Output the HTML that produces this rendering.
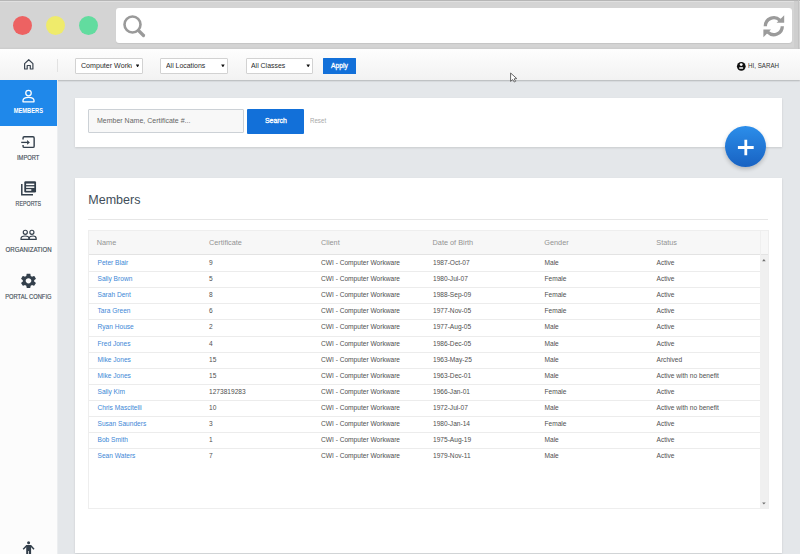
<!DOCTYPE html>
<html><head><meta charset="utf-8">
<style>
*{margin:0;padding:0;box-sizing:border-box}
html,body{width:800px;height:554px;overflow:hidden;background:#e4e7ea;font-family:"Liberation Sans",sans-serif}
.a{position:absolute}
#chrome{left:0;top:0;width:800px;height:48.5px;background:linear-gradient(#d4d4d4 0,#d4d4d4 45.5px,#cbcbcb 48.5px);border-top:1px solid #b6b6b6;box-shadow:inset 0 1px 0 #e0e0e0}
#addr{left:116px;top:8px;width:676px;height:35px;background:#fff;border-radius:3px;box-shadow:0 1px 1px rgba(0,0,0,.07)}
.dot{width:19.3px;height:19.3px;border-radius:50%}
#hdr{left:0;top:48.5px;width:800px;height:31.5px;background:linear-gradient(#fefefe,#f2f2f2);box-shadow:0 1px 1.5px rgba(0,0,0,.22)}
.sel{height:15.6px;width:67.8px;background:#fff;border:1px solid #d2d2d2;border-radius:1px;font-size:7.4px;color:#2a2a2a;line-height:14px;white-space:nowrap}.sel span{position:absolute;left:4.8px;top:0.2px;width:53.5px;overflow:hidden;transform:scaleX(0.935);transform-origin:0 0}
.sel:after{content:"";position:absolute;right:2.4px;top:5.4px;width:3.6px;height:3px;background:#111;clip-path:polygon(0 0,100% 0,50% 100%)}
#side{left:0;top:80px;width:57.2px;height:474px;background:#fcfcfc;box-shadow:1px 0 0 #eceef0}
.nav{left:0;width:57.2px;text-align:center;font-size:6.8px;line-height:8px;color:#46505a;white-space:nowrap;-webkit-text-stroke:0.15px #46505a}.nav span{display:inline-block}
.card{background:#fff;box-shadow:0 1px 2px rgba(0,0,0,.12)}
.th{position:absolute;top:7.5px;font-size:7.3px;color:#939393;line-height:8px}
.row{position:absolute;left:0;width:671px;height:16.07px;border-bottom:1px solid #ececec}
.row span{position:absolute;top:3.0px;font-size:6.6px;line-height:8px;color:#4f4f4f;white-space:nowrap}
.row span.n{color:#3d87d6}.row:last-child{border-bottom:none}
</style></head><body>
<div id="chrome" class="a"></div>
<div class="a dot" style="left:12.6px;top:16.2px;background:#ed6262"></div>
<div class="a dot" style="left:45.8px;top:16.2px;background:#efeb6b"></div>
<div class="a dot" style="left:78.8px;top:16.2px;background:#62dc9f"></div>
<div id="addr" class="a"></div>
<!-- search icon -->
<svg class="a" style="left:120px;top:12px" width="28" height="28" viewBox="0 0 28 28"><circle cx="12.5" cy="12.5" r="8" fill="none" stroke="#9a9a9a" stroke-width="2.6"/><line x1="18.5" y1="18.5" x2="23.5" y2="23.5" stroke="#9a9a9a" stroke-width="3.2" stroke-linecap="round"/></svg>
<!-- refresh icon -->
<svg class="a" style="left:760px;top:0" width="40" height="50" viewBox="0 0 40 50"><path d="M5.3 26.2 A8.5 8.5 0 0 1 19.8 20.2" fill="none" stroke="#9b9b9b" stroke-width="3.3"/><path d="M24.2 15.2 L24.2 22.8 L16.6 22.8 Z" fill="#9b9b9b"/><path d="M22.3 26.2 A8.5 8.5 0 0 1 7.8 32.2" fill="none" stroke="#9b9b9b" stroke-width="3.3"/><path d="M3.4 37.2 L3.4 29.6 L11 29.6 Z" fill="#9b9b9b"/></svg>
<div class="a" style="left:793.5px;top:1px;width:4.1px;height:47.5px;background:#cecece"></div><div class="a" style="left:797.6px;top:0;width:1px;height:48.5px;background:#c3c3c3"></div>

<div id="hdr" class="a"></div>
<div class="a" style="left:57px;top:58.5px;width:1px;height:13px;background:#e2e2e2"></div>
<div class="a sel" style="left:75px;top:58px"><span style="transform:scaleX(0.96);width:53px">Computer Workware</span></div>
<div class="a sel" style="left:160.3px;top:58px"><span>All Locations</span></div>
<div class="a sel" style="left:245.6px;top:58px"><span>All Classes</span></div>
<div class="a" style="left:323.2px;top:58.2px;width:32.8px;height:15.6px;background:#1270d9;border-radius:0.5px"></div><div class="a" style="left:331.2px;top:62.2px;color:#fff;font-size:6.9px;line-height:8px;-webkit-text-stroke:0.3px #fff;transform:scaleX(0.975);transform-origin:0 0">Apply</div>
<svg class="a" style="left:734px;top:58.3px" width="16" height="16" viewBox="734 58 16 16"><circle cx="741.3" cy="66.3" r="4.35" fill="#111"/><circle cx="741.2" cy="64.6" r="1.45" fill="#fff"/><rect x="739.1" y="67.2" width="4.1" height="1.5" rx="0.6" fill="#fff"/></svg>
<div class="a" style="left:748px;top:62.3px;font-size:6.8px;color:#333;line-height:8px;transform:scaleX(0.912);transform-origin:0 0;white-space:nowrap">HI, SARAH</div>

<div id="side" class="a"></div>
<div class="a" style="left:0;top:80px;width:57.2px;height:45.8px;background:#1f88ea"></div>
<svg class="a" style="left:0;top:0" width="57" height="554" viewBox="0 0 57 554">
<!-- members -->
<circle cx="28.5" cy="93.0" r="2.75" fill="none" stroke="#fff" stroke-width="1.25"/>
<path d="M23.0 101.8 V100.6 C23.0 98.4 25.6 97.4 28.5 97.4 C31.4 97.4 34.0 98.4 34.0 100.6 V101.8 Z" fill="none" stroke="#fff" stroke-width="1.3" stroke-linejoin="round"/>
<!-- import -->
<path d="M23.05 139.5 V137.9 Q23.05 136.7 24.25 136.7 H32.95 Q34.15 136.7 34.15 137.9 V146.15 Q34.15 147.35 32.95 147.35 H24.25 Q23.05 147.35 23.05 146.15 V144.9" fill="none" stroke="#333f4b" stroke-width="1.4"/>
<path d="M21.2 142.4 H27.6" stroke="#333f4b" stroke-width="1.3"/>
<path d="M27.1 140 L29.9 142.4 L27.1 144.8 Z" fill="#333f4b"/>
<!-- reports -->
<rect x="24.3" y="181.2" width="11.75" height="11.3" rx="1.2" fill="#333f4b"/>
<rect x="26.1" y="183.6" width="8.2" height="1.5" fill="#fff"/>
<rect x="26.1" y="186.4" width="8.2" height="1.5" fill="#fff"/>
<rect x="26.1" y="189.2" width="5.2" height="1.6" fill="#fff"/>
<path d="M21.8 184 V194.8 H33" fill="none" stroke="#333f4b" stroke-width="1.5"/>
<!-- organization -->
<circle cx="25.3" cy="232.3" r="2.05" fill="none" stroke="#333f4b" stroke-width="1.15"/>
<circle cx="31.9" cy="232.3" r="2.05" fill="none" stroke="#333f4b" stroke-width="1.15"/>
<path d="M21.0 239.4 V238.7 C21.0 236.9 23.1 236.0 25.05 236.0 C27.0 236.0 29.1 236.9 29.1 238.7 V239.4 Z" fill="none" stroke="#333f4b" stroke-width="1.2" stroke-linejoin="round"/>
<path d="M29.1 239.4 V238.7 C29.1 236.9 31.2 236.0 33.15 236.0 C35.1 236.0 36.2 236.9 36.2 238.7 V239.4 Z" fill="none" stroke="#333f4b" stroke-width="1.2" stroke-linejoin="round"/>
<!-- gear -->
<g transform="translate(19.02 272.03) scale(0.79 0.735)"><path fill="#333f4b" d="M19.14,12.94c0.04-0.3,0.06-0.61,0.06-0.94c0-0.32-0.02-0.64-0.07-0.94l2.03-1.58c0.18-0.14,0.23-0.41,0.12-0.61l-1.92-3.32c-0.12-0.22-0.37-0.29-0.59-0.22l-2.39,0.96c-0.5-0.38-1.03-0.7-1.62-0.94L14.4,2.81c-0.04-0.24-0.24-0.41-0.48-0.41h-3.84c-0.24,0-0.43,0.17-0.47,0.41L9.25,5.35C8.66,5.590,8.12,5.92,7.63,6.29L5.24,5.33c-0.22-0.08-0.47,0-0.59,0.22L2.74,8.87C2.62,9.08,2.66,9.34,2.86,9.48l2.03,1.58C4.84,11.36,4.8,11.69,4.8,12s0.02,0.64,0.07,0.94l-2.03,1.58c-0.18,0.14-0.23,0.41-0.12,0.61l1.92,3.32c0.12,0.22,0.37,0.29,0.59,0.22l2.39-0.96c0.5,0.38,1.03,0.7,1.62,0.94l0.36,2.54c0.05,0.24,0.24,0.41,0.48,0.41h3.84c0.24,0,0.44-0.17,0.47-0.41l0.36-2.54c0.59-0.24,1.130-0.56,1.62-0.94l2.39,0.96c0.22,0.08,0.47,0,0.59-0.22l1.92-3.32c0.12-0.22,0.07-0.47-0.12-0.61L19.14,12.94z M12,15.6c-1.98,0-3.6-1.62-3.6-3.6s1.62-3.6,3.6-3.6s3.6,1.62,3.6,3.6S13.98,15.6,12,15.6z"/></g>
<!-- accessibility -->
<circle cx="28.6" cy="542.7" r="1.5" fill="#333f4b"/>
<path d="M23.2 549.2 L26.6 545.8 H30.8 L34.0 549.2" fill="none" stroke="#333f4b" stroke-width="1.5" stroke-linejoin="round"/>
<rect x="26.2" y="545.2" width="4.9" height="9" fill="#333f4b"/>
<rect x="28.3" y="551" width="0.7" height="3" fill="#fcfcfc"/>
<!-- home -->
<path d="M24.6 69 V63.6 L28.75 59.7 L32.9 63.6 V69 H30.3 V65.5 H27.2 V69 Z" fill="none" stroke="#3a4450" stroke-width="1.2" stroke-linejoin="round"/>
</svg>
<div class="a nav" style="top:107px;color:#fff;font-weight:bold;-webkit-text-stroke:0"><span style="transform:scaleX(0.842)">MEMBERS</span></div>
<div class="a nav" style="top:153.5px"><span style="transform:scaleX(0.851)">IMPORT</span></div>
<div class="a nav" style="top:199.5px"><span style="transform:scaleX(0.78)">REPORTS</span></div>
<div class="a nav" style="top:246px"><span style="transform:scaleX(0.898)">ORGANIZATION</span></div>
<div class="a nav" style="top:292.5px"><span style="transform:scaleX(0.847)">PORTAL CONFIG</span></div>

<!-- search card -->
<div class="a card" style="left:75px;top:98px;width:707px;height:49px"></div>
<div class="a" style="left:88.2px;top:108.8px;width:155.6px;height:24.7px;background:#f8f8f8;border:1px solid #ccd1d6;border-radius:1px"></div><div class="a" style="left:97px;top:117.2px;font-size:7px;color:#666;line-height:8px;white-space:nowrap">Member Name, Certificate #...</div>
<div class="a" style="left:246.6px;top:109px;width:57.8px;height:24.6px;background:#1270d9;border-radius:1px"></div><div class="a" style="left:264.7px;top:117px;color:#fff;font-size:7.1px;line-height:8px;white-space:nowrap;-webkit-text-stroke:0.3px #fff;transform:scaleX(0.975);transform-origin:0 0">Search</div>
<div class="a" style="left:310.2px;top:117.3px;font-size:7px;color:#a9a9a9;line-height:8px;transform:scaleX(0.88);transform-origin:0 0">Reset</div>

<!-- members card -->
<div class="a card" style="left:75px;top:177.5px;width:707px;height:375.8px"></div>
<div class="a" style="left:88.3px;top:192.8px;font-size:12.5px;color:#414d59;line-height:14px">Members</div>
<div class="a" style="left:88px;top:219px;width:680px;height:1px;background:#e6e6e6"></div>

<div class="a" style="left:88px;top:230px;width:680.5px;height:278.5px;border:1px solid #eeeeee;background:#fff;overflow:hidden">
  <div class="a" style="left:0;top:0;width:680px;height:24px;background:#f7f7f7;border-bottom:1px solid #e3e3e3"></div>
  <div class="th" style="left:7.8px">Name</div>
  <div class="th" style="left:120px">Certificate</div>
  <div class="th" style="left:232px">Client</div>
  <div class="th" style="left:343.6px">Date of Birth</div>
  <div class="th" style="left:455.3px">Gender</div>
  <div class="th" style="left:567.3px">Status</div>
  <div class="a" style="left:671px;top:24px;width:9px;height:254px;background:#f0f0f0"></div><div class="a" style="left:670.5px;top:0;width:1px;height:24px;background:#efefef"></div>
  <div id="rows" class="a" style="left:0;top:25.1px;width:671px">
<div class="row" style="top:0.00px"><span class="n" style="left:8.5px">Peter Blair</span><span style="left:120px">9</span><span style="left:232px">CWI - Computer Workware</span><span style="left:344px">1987-Oct-07</span><span style="left:455.5px">Male</span><span style="left:567.5px">Active</span></div>
<div class="row" style="top:16.10px"><span class="n" style="left:8.5px">Sally Brown</span><span style="left:120px">5</span><span style="left:232px">CWI - Computer Workware</span><span style="left:344px">1980-Jul-07</span><span style="left:455.5px">Female</span><span style="left:567.5px">Active</span></div>
<div class="row" style="top:32.20px"><span class="n" style="left:8.5px">Sarah Dent</span><span style="left:120px">8</span><span style="left:232px">CWI - Computer Workware</span><span style="left:344px">1988-Sep-09</span><span style="left:455.5px">Female</span><span style="left:567.5px">Active</span></div>
<div class="row" style="top:48.30px"><span class="n" style="left:8.5px">Tara Green</span><span style="left:120px">6</span><span style="left:232px">CWI - Computer Workware</span><span style="left:344px">1977-Nov-05</span><span style="left:455.5px">Female</span><span style="left:567.5px">Active</span></div>
<div class="row" style="top:64.40px"><span class="n" style="left:8.5px">Ryan House</span><span style="left:120px">2</span><span style="left:232px">CWI - Computer Workware</span><span style="left:344px">1977-Aug-05</span><span style="left:455.5px">Male</span><span style="left:567.5px">Active</span></div>
<div class="row" style="top:80.50px"><span class="n" style="left:8.5px">Fred Jones</span><span style="left:120px">4</span><span style="left:232px">CWI - Computer Workware</span><span style="left:344px">1986-Dec-05</span><span style="left:455.5px">Male</span><span style="left:567.5px">Active</span></div>
<div class="row" style="top:96.60px"><span class="n" style="left:8.5px">Mike Jones</span><span style="left:120px">15</span><span style="left:232px">CWI - Computer Workware</span><span style="left:344px">1963-May-25</span><span style="left:455.5px">Male</span><span style="left:567.5px">Archived</span></div>
<div class="row" style="top:112.70px"><span class="n" style="left:8.5px">Mike Jones</span><span style="left:120px">15</span><span style="left:232px">CWI - Computer Workware</span><span style="left:344px">1963-Dec-01</span><span style="left:455.5px">Male</span><span style="left:567.5px">Active with no benefit</span></div>
<div class="row" style="top:128.80px"><span class="n" style="left:8.5px">Sally Kim</span><span style="left:120px">1273819283</span><span style="left:232px">CWI - Computer Workware</span><span style="left:344px">1966-Jan-01</span><span style="left:455.5px">Female</span><span style="left:567.5px">Active</span></div>
<div class="row" style="top:144.90px"><span class="n" style="left:8.5px">Chris Mascitelli</span><span style="left:120px">10</span><span style="left:232px">CWI - Computer Workware</span><span style="left:344px">1972-Jul-07</span><span style="left:455.5px">Male</span><span style="left:567.5px">Active with no benefit</span></div>
<div class="row" style="top:161.00px"><span class="n" style="left:8.5px">Susan Saunders</span><span style="left:120px">3</span><span style="left:232px">CWI - Computer Workware</span><span style="left:344px">1980-Jan-14</span><span style="left:455.5px">Female</span><span style="left:567.5px">Active</span></div>
<div class="row" style="top:177.10px"><span class="n" style="left:8.5px">Bob Smith</span><span style="left:120px">1</span><span style="left:232px">CWI - Computer Workware</span><span style="left:344px">1975-Aug-19</span><span style="left:455.5px">Male</span><span style="left:567.5px">Active</span></div>
<div class="row" style="top:193.20px"><span class="n" style="left:8.5px">Sean Waters</span><span style="left:120px">7</span><span style="left:232px">CWI - Computer Workware</span><span style="left:344px">1979-Nov-11</span><span style="left:455.5px">Male</span><span style="left:567.5px">Active</span></div>
</div>
</div>
</div>
<svg class="a" style="left:755px;top:250px" width="18" height="260" viewBox="755 250 18 260"><path d="M762.1 261.2 L765.7 261.2 L763.9 259 Z" fill="#6f6f6f"/><path d="M762.1 502.4 L765.7 502.4 L763.9 504.6 Z" fill="#6f6f6f"/></svg>
<!-- FAB -->
<div class="a" style="left:724.7px;top:125.8px;width:41.6px;height:41.6px;border-radius:50%;background:linear-gradient(#2c8eea,#1862c2);box-shadow:0 2px 4px rgba(0,0,0,.22)"></div>
<svg class="a" style="left:724.7px;top:125.8px" width="42" height="42" viewBox="0 0 42 42"><path d="M12.9 21.5 H28.7 M20.8 13.8 V29.2" stroke="#fff" stroke-width="2.8"/></svg>
<!-- cursor -->
<svg class="a" style="left:505px;top:68px" width="16" height="18" viewBox="0 0 16 18"><path d="M5.6 5 L5.6 13.4 L7.6 11.6 L9.4 14 L10.6 13.3 L9.1 10.9 L11.8 10.6 Z" fill="#fff" stroke="#555" stroke-width="0.9" stroke-linejoin="round"/></svg>
</body></html>
